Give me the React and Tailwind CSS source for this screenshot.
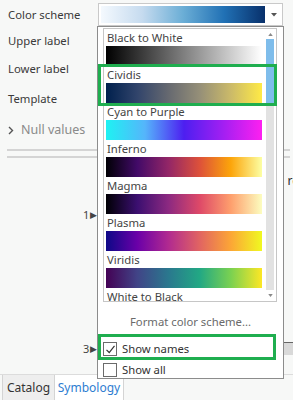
import React from "react";

const schemes = [
  { name: "Black to White", g: "bg-[linear-gradient(to_right,#000000,#ffffff)]" },
  { name: "Cividis", g: "bg-[linear-gradient(to_right,#00204d,#31446b,#666970,#958f78,#cbba69,#ffea46)]" },
  { name: "Cyan to Purple", g: "bg-[linear-gradient(to_right,#1ef2f2,#55b5fb_25%,#4d1ff0_50%,#a21ff2_75%,#fd20f0)]" },
  { name: "Inferno", g: "bg-[linear-gradient(to_right,#000004,#420a68,#932667,#dd513a,#fca50a,#fcffa4)]" },
  { name: "Magma", g: "bg-[linear-gradient(to_right,#000004,#3b0f70,#8c2981,#de4968,#fe9f6d,#fcfdbf)]" },
  { name: "Plasma", g: "bg-[linear-gradient(to_right,#0d0887,#6a00a8,#b12a90,#e16462,#fca636,#f0f921)]" },
  { name: "Viridis", g: "bg-[linear-gradient(to_right,#440154,#414487,#2a788e,#22a884,#7ad151,#fde725)]" },
  { name: "White to Black", g: "bg-[linear-gradient(to_right,#ffffff,#000000)]" },
];

function Check({ checked }) {
  return (
    <div className="w-[14px] h-[14px] border border-[#6b6b6b] bg-white flex items-center justify-center">
      {checked && (
        <svg width="11" height="11" viewBox="0 0 11 11">
          <path d="M1.5 5.8 L4.2 8.5 L9.5 1.8" fill="none" stroke="#333" strokeWidth="1.2" />
        </svg>
      )}
    </div>
  );
}

export default function App() {
  return (
    <div className="relative w-[293px] h-[400px] overflow-hidden bg-[#f7f8f7] font-['Noto_Sans',sans-serif] text-[11.3px] text-[#3a3a3a] flex flex-col">
      {/* Color scheme row */}
      <div className="flex items-center h-[23px] mt-[3px]">
        <div className="w-[98px] pl-[8px] leading-[18px]">Color scheme</div>
        <div className="w-[185px] h-[23px] border border-[#c9c9c9] bg-white flex items-center pl-[2px]">
          <div className="w-[164px] h-[17px] bg-[linear-gradient(to_right,#f4f9fe,#c6dbef_25%,#6baed6_50%,#2171b5_75%,#08306b)]" />
          <div className="flex-1 flex justify-center">
            <svg width="6" height="4" viewBox="0 0 6 4"><path d="M0 0 H6 L3 3.5 Z" fill="#555" /></svg>
          </div>
        </div>
      </div>
      <div className="pl-[8px] leading-[18px] mt-[6px]">Upper label</div>
      <div className="pl-[8px] leading-[18px] mt-[10px]">Lower label</div>
      <div className="pl-[8px] leading-[18px] mt-[12px]">Template</div>
      <div className="pl-[8px] leading-[18px] mt-[13px] flex items-center text-[#8a8a8a] text-[12.5px]">
        <svg width="6" height="9" viewBox="0 0 6 9" className="mr-[7px]"><path d="M1 1 L4.5 4.5 L1 8" fill="none" stroke="#555" strokeWidth="1.4" /></svg>
        Null values
      </div>
      <div className="ml-[7px] mr-[3px] mt-[10px] h-[2px] bg-[#d4d4d4]" />
      <div className="ml-[7px] mr-[3px] mt-[5px] h-[2px] bg-[#d4d4d4]" />
      <div className="flex justify-end mt-[15px] text-[#2b2b2b] leading-[16px] text-[12px] translate-x-[6px]">re</div>

      {/* right side fragments */}
      <div className="flex justify-end mt-[153px]">
        <div className="w-[10px] border-t border-[#666] h-[13px] bg-[#d9d9d9]" />
      </div>

      {/* tabs */}
      <div className="mt-auto h-[26px] flex items-stretch border-t border-[#dcdcdc] bg-[#f7f8f7]">
        <div className="ml-[2px] w-[53px] border-l border-r border-[#d4d4d4] bg-[#eeeeee] flex items-center justify-center text-[#333] text-[12px]">Catalog</div>
        <div className="w-[69px] border-r border-[#d4d4d4] bg-white flex items-center justify-center text-[#2e7dd1] text-[12px]">Symbology</div>
      </div>

      {/* callout markers */}
      <div className="absolute left-[83px] top-[207px] flex items-center text-[11px] text-[#444] leading-[16px]">
        1<span className="text-[9px] ml-[1px]">▶</span>
      </div>
      <div className="absolute left-[83px] top-[341px] flex items-center text-[11px] text-[#444] leading-[16px]">
        3<span className="text-[9px] ml-[1px]">▶</span>
      </div>

      {/* dropdown popup */}
      <div className="absolute left-[97px] top-[26px] w-[187px] h-[353px] bg-white border border-[#8c8c8c] flex flex-col items-start">
        <div className="ml-[5px] mt-[1px] w-[174px] h-[275px] border border-[#c6c6c6] flex overflow-hidden">
          <div className="w-[160px] h-full overflow-hidden">
            {schemes.map((s) => (
              <div key={s.name}>
                <div className="h-[17px] leading-[17px] pl-[3px] text-[#444] whitespace-nowrap">{s.name}</div>
                <div className={`ml-[2px] w-[156px] h-[20px] ${s.g}`} />
              </div>
            ))}
          </div>
          <div className="w-[12px] h-full flex flex-col items-center">
            <svg width="9" height="6" viewBox="0 0 9 6" className="mt-[4px]"><path d="M0 6 L4.5 0 L9 6 Z" fill="#8a8a8a" /></svg>
            <div className="mt-[3px] w-[8px] flex-1 flex flex-col">
              <div className="h-[64px] bg-[#7fbdeb]" />
              <div className="h-[187px] bg-[#e2e2e2]" />
            </div>
            <svg width="9" height="6" viewBox="0 0 9 6" className="mb-[4px] mt-[4px]"><path d="M0 0 L9 0 L4.5 6 Z" fill="#8a8a8a" /></svg>
          </div>
        </div>
        <div className="w-full text-center text-[#6a6a6a] mt-[11px] leading-[17px]">Format color scheme...</div>
        <div className="flex items-center ml-[5px] mt-[11px] h-[16px]">
          <Check checked />
          <span className="ml-[5px] text-[#333]">Show names</span>
        </div>
        <div className="flex items-center ml-[5px] mt-[5px] h-[16px]">
          <Check />
          <span className="ml-[5px] text-[#333]">Show all</span>
        </div>
      </div>

      {/* green highlight boxes */}
      <div className="absolute left-[98px] top-[64px] w-[179px] h-[42px] border-[3px] border-[#1fae4f]" />
      <div className="absolute left-[98px] top-[334px] w-[178px] h-[26px] border-[3px] border-[#1fae4f]" />
    </div>
  );
}
